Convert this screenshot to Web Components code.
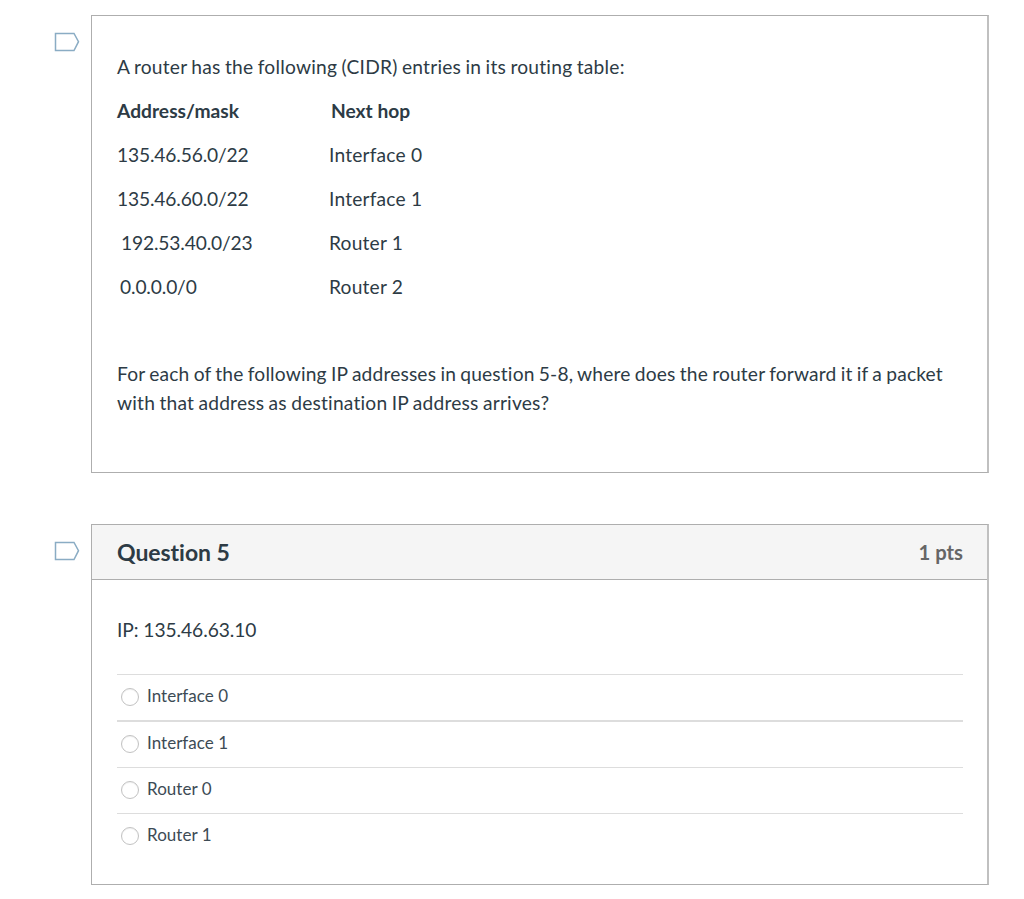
<!DOCTYPE html>
<html lang="en"><head><meta charset="utf-8"><title>Quiz</title>
<style>
html,body{margin:0;background:#fff}
body{font-family:Lato,"Open Sans",sans-serif;color:#2d3b45;width:1024px;height:899px;overflow:hidden}
main{display:flex;flex-direction:column;gap:51px;padding:15px 35px 0 54px}
</style></head><body>
<template id="flag-t"><style>
:host{display:block;width:37px;flex:none;padding-top:17px}
svg{display:block;width:26px;height:20px}
</style><svg viewBox="0 0 26 20" fill="none"><path d="M1.5 1.5H20L24.5 9.7L20 18.5H1.5Z" stroke="#8aacc4" stroke-width="1.5"/></svg></template>
<template id="card-t"><style>
:host{display:flex;align-items:flex-start}
.box{flex:1;border:1px solid #aeaeae;border-right:2px solid #c0c0c0;min-width:0;box-sizing:border-box;height:var(--h)}
</style><q-flag></q-flag><div class="box"><slot></slot></div></template>
<template id="intro-t"><style>
:host{display:block;padding:36px 25px 0;font-size:19.2px;line-height:29px}
::slotted(p){margin:0 0 15px;letter-spacing:.18px;word-spacing:-.8px}
</style><slot></slot></template>
<template id="row-t"><style>
:host{display:grid;grid-template-columns:212px 1fr;height:29px;margin-bottom:15px;font-size:19.2px;line-height:29px;letter-spacing:-.14px}
.b{letter-spacing:.2px}
</style><span><slot name="a"></slot></span><span class="b"><slot name="b"></slot></span></template>
<template id="head-t"><style>
:host{display:flex;justify-content:space-between;align-items:center;height:54px;padding:0 24px 0 25px;background:#f5f5f5;border-bottom:1px solid #aeaeae}
h2{margin:0 0 1px;font-size:23px;font-weight:700;color:#2d3b45;letter-spacing:-.05px}
span{font-size:20.3px;font-weight:700;color:#666}
</style><h2><slot name="title"></slot></h2><span><slot name="pts"></slot></span></template>
<template id="opt-t"><style>
:host{display:flex;align-items:center;height:45px;border-top:1px solid #ddd;font-size:17px;color:#3d4b55}
i{width:16px;height:16px;border:1px solid #c2c2c2;border-radius:50%;margin:-1px 0 0 4px;flex:none;box-shadow:inset 0 1px 1px #f0f0f0}
span{margin:var(--t,-4px) 0 0 8px;letter-spacing:.03px}
</style><i></i><span><slot></slot></span></template>
<main>
<q-card style="--h:458px"><q-intro>
<p style="letter-spacing:.23px">A router has the following (CIDR) entries in its routing table:</p>
<q-row><strong slot="a" style="font-weight:700;letter-spacing:.02px">Address/mask</strong><strong slot="b" style="font-weight:700;margin-left:2px;letter-spacing:0">Next hop</strong></q-row>
<q-row><span slot="a">135.46.56.0/22</span><span slot="b">Interface 0</span></q-row>
<q-row><span slot="a">135.46.60.0/22</span><span slot="b">Interface 1</span></q-row>
<q-row><span slot="a" style="margin-left:4px">192.53.40.0/23</span><span slot="b">Router 1</span></q-row>
<q-row><span slot="a" style="margin-left:3px">0.0.0.0/0</span><span slot="b">Router 2</span></q-row>
<p style="margin-top:58px;letter-spacing:.16px">For each of the following IP addresses in question 5-8, where does the router forward it if a packet <span style="letter-spacing:.21px">with that address as destination IP address arrives?</span></p>
</q-intro></q-card>
<q-card style="--h:361px">
<q-head><span slot="title">Question 5</span><span slot="pts">1 pts</span></q-head>
<q-body>
<div style="font-size:19.2px;line-height:29px;margin:35px 0 30px;letter-spacing:-.06px">IP: 135.46.63.10</div>
<q-opt>Interface 0</q-opt><q-opt style="border-top-width:2px;--t:-5px">Interface 1</q-opt><q-opt style="--t:-5px">Router 0</q-opt><q-opt style="--t:-5px">Router 1</q-opt>
</q-body></q-card>
</main>
<script>
const mk=(n,t)=>customElements.define(n,class extends HTMLElement{constructor(){super();this.attachShadow({mode:'open'}).appendChild(document.getElementById(t).content.cloneNode(true));}});
mk('q-flag','flag-t');mk('q-card','card-t');mk('q-intro','intro-t');mk('q-row','row-t');mk('q-head','head-t');mk('q-opt','opt-t');
customElements.define('q-body',class extends HTMLElement{constructor(){super();this.attachShadow({mode:'open'}).innerHTML='<style>:host{display:block;padding:0 24px 0 25px}</style><slot></slot>';}});
</script>
</body></html>
